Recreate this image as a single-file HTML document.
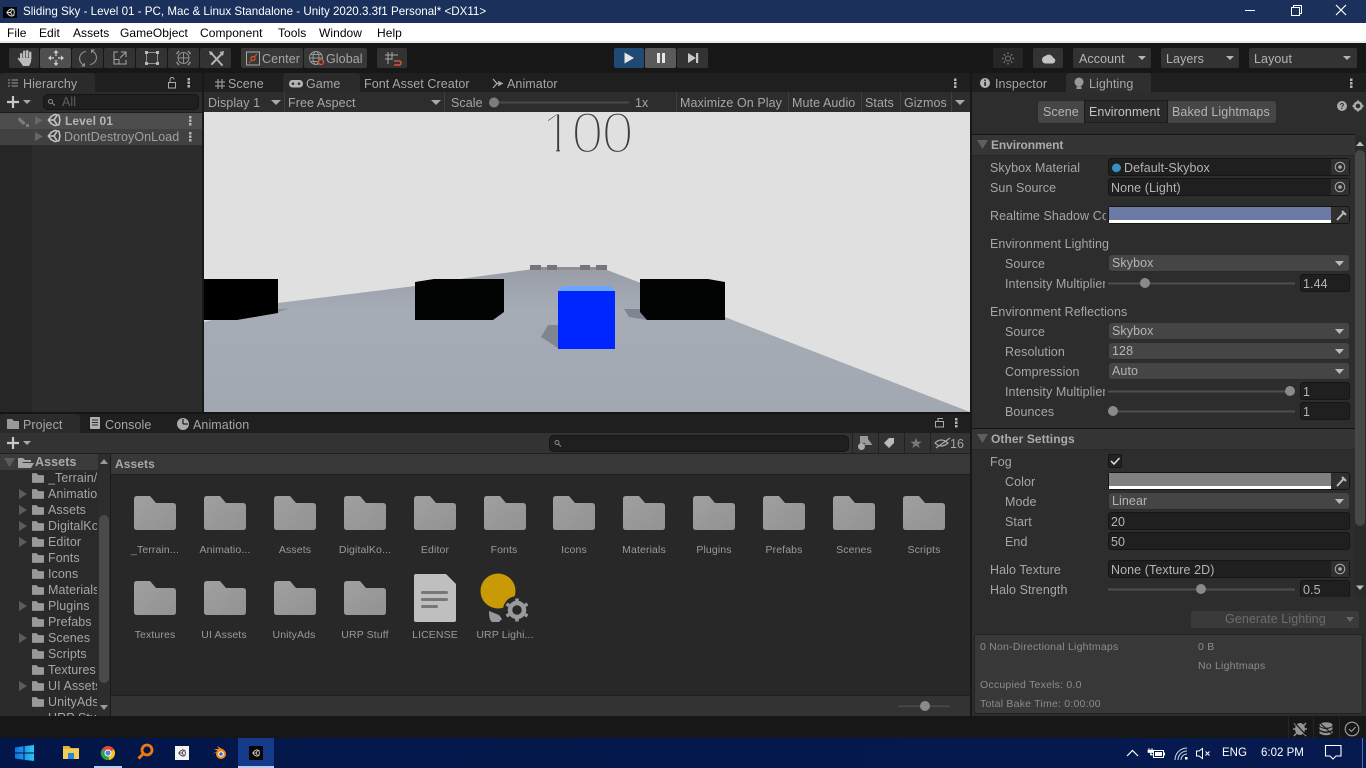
<!DOCTYPE html>
<html><head><meta charset="utf-8"><title>Unity</title>
<style>
html,body{margin:0;padding:0;background:#191919;width:1366px;height:768px;overflow:hidden}
body{position:relative;font-family:"Liberation Sans",sans-serif;font-size:12.5px;letter-spacing:.08px;color:#a6a6a6}
.b{position:absolute}
.t{position:absolute;white-space:nowrap;line-height:16px;height:16px}
.f{position:absolute;background:#1f1f1f;border:1px solid #151515;border-radius:3px;box-sizing:border-box}
.d{position:absolute;background:#454545;border-radius:3px;box-sizing:border-box;border-bottom:1px solid #2a2a2a;left:1109px;width:240px;height:17px}
.h{font-weight:bold}
.c{text-align:center;transform:translateX(-50%);font-size:10.5px;color:#9a9a9a;letter-spacing:.12px}
.m{color:#000;font-size:12px;letter-spacing:.05px;top:25px}
.tool{position:absolute;top:48px;height:20px;background:#333;border-radius:2px}
.s{font-size:10.5px;color:#8c8c8c;letter-spacing:.22px}
.cl{overflow:hidden}
svg{position:absolute;left:0;top:0}
</style></head><body>
<!-- title bar -->
<div class="b" style="left:0;top:0;width:1366px;height:23px;background:#1c305c"></div>
<div class="b" style="left:0;top:23px;width:1366px;height:19px;background:#fff"></div>
<div class="b" style="left:0;top:41px;width:1366px;height:2px;background:#ececec"></div>
<div class="b" style="left:0;top:43px;width:1366px;height:30px;background:#171717"></div>
<!-- toolbar buttons -->
<div class="tool" style="left:9px;width:30px"></div>
<div class="tool" style="left:40px;width:31px;background:#4f4f4f"></div>
<div class="tool" style="left:72px;width:31px"></div>
<div class="tool" style="left:104px;width:31px"></div>
<div class="tool" style="left:136px;width:31px"></div>
<div class="tool" style="left:168px;width:31px"></div>
<div class="tool" style="left:200px;width:31px"></div>
<div class="tool" style="left:241px;width:62px;background:#383838"></div>
<div class="tool" style="left:304px;width:63px;background:#383838"></div>
<div class="tool" style="left:377px;width:30px"></div>
<div class="tool" style="left:614px;width:30px;background:#1f4a74"></div>
<div class="tool" style="left:645px;width:31px;background:#5a5a5a"></div>
<div class="tool" style="left:677px;width:31px"></div>
<div class="tool" style="left:993px;width:30px;background:#262626"></div>
<div class="tool" style="left:1033px;width:30px"></div>
<div class="tool" style="left:1073px;width:78px"></div>
<div class="tool" style="left:1161px;width:78px"></div>
<div class="tool" style="left:1249px;width:108px"></div>
<!-- hierarchy -->
<div class="b" style="left:0;top:73px;width:202px;height:19px;background:#1f1f1f"></div>
<div class="b" style="left:0;top:73px;width:95px;height:19px;background:#2b2b2b;border-radius:3px 3px 0 0"></div>
<div class="b" style="left:0;top:92px;width:202px;height:320px;background:#2c2c2c"></div>
<div class="b" style="left:0;top:145px;width:32px;height:267px;background:#262626"></div>
<div class="f" style="left:43px;top:94px;width:156px;height:16px;border-radius:5px"></div>
<div class="b" style="left:0;top:113px;width:202px;height:16px;background:#4d4d4d"></div>
<div class="b" style="left:0;top:129px;width:202px;height:16px;background:#414141"></div>
<div class="b" style="left:0;top:112px;width:202px;height:1px;background:#1c1c1c"></div>
<!-- game -->
<div class="b" style="left:204px;top:73px;width:766px;height:19px;background:#1f1f1f;border-radius:3px 3px 0 0"></div>
<div class="b" style="left:283px;top:73px;width:77px;height:19px;background:#2b2b2b;border-radius:3px 3px 0 0"></div>
<div class="b" style="left:204px;top:92px;width:766px;height:20px;background:#2d2d2d"></div>
<div class="b" style="left:204px;top:112px;width:766px;height:300px;background:#e0e0e0;overflow:hidden">
<div class="t" style="left:337px;top:-7px;font-size:58px;line-height:58px;height:58px;letter-spacing:-2px;color:#3c3c3c;-webkit-text-stroke:3.2px #e0e0e0">100</div>
<div class="b" style="left:340px;top:36px;width:12px;height:9px;background:#e0e0e0"></div>
<div class="b" style="left:356px;top:36px;width:12px;height:9px;background:#e0e0e0"></div>
</div>
<!-- project -->
<div class="b" style="left:0;top:412px;width:970px;height:2px;background:#151515"></div>
<div class="b" style="left:0;top:414px;width:970px;height:19px;background:#1f1f1f"></div>
<div class="b" style="left:0;top:414px;width:80px;height:19px;background:#2b2b2b;border-radius:3px 3px 0 0"></div>
<div class="b" style="left:0;top:433px;width:970px;height:21px;background:#333;border-bottom:1px solid #202020;box-sizing:border-box"></div>
<div class="f" style="left:549px;top:435px;width:300px;height:17px;border-radius:5px"></div>
<div class="b" style="left:852px;top:433px;width:1px;height:20px;background:#222"></div>
<div class="b" style="left:878px;top:433px;width:1px;height:20px;background:#222"></div>
<div class="b" style="left:904px;top:433px;width:1px;height:20px;background:#222"></div>
<div class="b" style="left:930px;top:433px;width:1px;height:20px;background:#222"></div>
<div class="b" style="left:0;top:454px;width:110px;height:262px;background:#2a2a2a"></div>
<div class="b" style="left:0;top:454px;width:98px;height:16px;background:#3b3b3b"></div>
<div class="b" style="left:98px;top:454px;width:12px;height:262px;background:#2d2d2d"></div>
<div class="b" style="left:99px;top:515px;width:10px;height:168px;background:#4a4a4a;border-radius:5px"></div>
<div class="b" style="left:110px;top:454px;width:1px;height:262px;background:#1a1a1a"></div>
<div class="b" style="left:111px;top:454px;width:859px;height:20px;background:#383838"></div>
<div class="b" style="left:111px;top:474px;width:859px;height:1px;background:#1e1e1e"></div>
<div class="b" style="left:111px;top:475px;width:859px;height:220px;background:#282828"></div>
<div class="b" style="left:111px;top:695px;width:859px;height:1px;background:#1e1e1e"></div>
<div class="b" style="left:111px;top:696px;width:859px;height:20px;background:#333"></div>
<!-- right panel -->
<div class="b" style="left:970px;top:73px;width:2px;height:643px;background:#171717"></div>
<div class="b" style="left:972px;top:73px;width:394px;height:19px;background:#1f1f1f;border-radius:3px 0 0 0"></div>
<div class="b" style="left:1066px;top:73px;width:85px;height:19px;background:#2f2f2f;border-radius:3px 3px 0 0"></div>
<div class="b" style="left:972px;top:92px;width:394px;height:624px;background:#2d2d2d"></div>
<div class="b" style="left:1038px;top:101px;width:46px;height:22px;background:#464646;border-radius:3px 0 0 3px"></div>
<div class="b" style="left:1084px;top:100px;width:84px;height:23px;background:#2a2a2a;border:1px solid #1c1c1c;box-sizing:border-box"></div>
<div class="b" style="left:1168px;top:101px;width:108px;height:22px;background:#464646;border-radius:0 3px 3px 0"></div>
<div class="b" style="left:972px;top:134px;width:383px;height:1px;background:#141414"></div>
<div class="b" style="left:972px;top:135px;width:383px;height:20px;background:#353535"></div>
<div class="b" style="left:972px;top:155px;width:383px;height:1px;background:#272727"></div>
<div class="b" style="left:972px;top:428px;width:383px;height:1px;background:#141414"></div>
<div class="b" style="left:972px;top:429px;width:383px;height:20px;background:#353535"></div>
<div class="b" style="left:972px;top:449px;width:383px;height:1px;background:#272727"></div>
<div class="b" style="left:1355px;top:135px;width:11px;height:463px;background:#2a2a2a"></div>
<div class="b" style="left:1355px;top:150px;width:10px;height:376px;background:#484848;border-radius:5px"></div>
<!-- fields -->
<div class="f" style="left:1108px;top:158px;width:242px;height:18px"></div>
<div class="b" style="left:1331px;top:159px;width:18px;height:16px;background:#303030"></div>
<div class="f" style="left:1108px;top:178px;width:242px;height:18px"></div>
<div class="b" style="left:1331px;top:179px;width:18px;height:16px;background:#303030"></div>
<div class="f" style="left:1108px;top:206px;width:242px;height:18px;background:#303030"></div>
<div class="b" style="left:1109px;top:207px;width:222px;height:13px;background:#6b7aa4"></div>
<div class="b" style="left:1109px;top:220px;width:222px;height:3px;background:#fff"></div>
<div class="d" style="top:255px"></div>
<div class="f" style="left:1300px;top:274px;width:50px;height:18px"></div>
<div class="d" style="top:323px"></div>
<div class="d" style="top:343px"></div>
<div class="d" style="top:363px"></div>
<div class="f" style="left:1300px;top:382px;width:50px;height:18px"></div>
<div class="f" style="left:1300px;top:402px;width:50px;height:18px"></div>
<div class="b" style="left:1108px;top:454px;width:14px;height:14px;background:#222;border:1px solid #151515;border-radius:2px;box-sizing:border-box"></div>
<div class="f" style="left:1108px;top:472px;width:242px;height:18px;background:#303030"></div>
<div class="b" style="left:1109px;top:473px;width:222px;height:13px;background:#808080"></div>
<div class="b" style="left:1109px;top:486px;width:222px;height:3px;background:#fff"></div>
<div class="d" style="top:493px"></div>
<div class="f" style="left:1108px;top:512px;width:242px;height:18px"></div>
<div class="f" style="left:1108px;top:532px;width:242px;height:18px"></div>
<div class="f" style="left:1108px;top:560px;width:242px;height:18px"></div>
<div class="b" style="left:1331px;top:561px;width:18px;height:16px;background:#303030"></div>
<div class="f" style="left:1300px;top:580px;width:50px;height:17px;border-bottom:0;border-radius:3px 3px 0 0"></div>
<div class="b" style="left:1191px;top:611px;width:168px;height:17px;background:#3a3a3a;border-radius:2px"></div>
<div class="b" style="left:974px;top:634px;width:389px;height:80px;background:#383838;border:1px solid #232323;border-radius:3px;box-sizing:border-box"></div>
<!-- status & taskbar -->
<div class="b" style="left:0;top:716px;width:1366px;height:22px;background:#171717"></div>
<div class="b" style="left:1288px;top:716px;width:1px;height:22px;background:#262626"></div>
<div class="b" style="left:1313px;top:716px;width:1px;height:22px;background:#262626"></div>
<div class="b" style="left:1339px;top:716px;width:1px;height:22px;background:#262626"></div>
<div class="b" style="left:0;top:738px;width:1366px;height:30px;background:linear-gradient(90deg,#02164a,#071a50)"></div>
<div class="b" style="left:238px;top:738px;width:36px;height:30px;background:#153a8a"></div>
<div class="b" style="left:238px;top:766px;width:36px;height:2px;background:#b5cdf5"></div>
<div class="b" style="left:94px;top:766px;width:28px;height:2px;background:#b5cdf5"></div>
<div class="b" style="left:1362px;top:738px;width:1px;height:30px;background:#5a6d98"></div>

<svg width="1366" height="768" viewBox="0 0 1366 768">
<defs>
<symbol id="fo" viewBox="0 0 42 34"><path d="M3 0H16L22 7H39Q42 7 42 10V31Q42 34 39 34H3Q0 34 0 31V3Q0 0 3 0Z"/></symbol>
<linearGradient id="fg" x1="0" y1="0" x2="1" y2="1"><stop offset="0" stop-color="#a0a0a0"/><stop offset="1" stop-color="#929292"/></linearGradient>
<linearGradient id="fl" gradientUnits="userSpaceOnUse" x1="0" y1="268" x2="0" y2="412"><stop offset="0" stop-color="#989da8"/><stop offset=".3" stop-color="#a6acb5"/><stop offset="1" stop-color="#a2a8b1"/></linearGradient>
<linearGradient id="wg" x1="0" y1="0" x2="1" y2="0"><stop offset="0" stop-color="#0a72e0"/><stop offset="1" stop-color="#30c4f5"/></linearGradient>
<symbol id="un" viewBox="0 0 14 14"><path d="M1.300 7 4.300 3.400 8 1.400 12 2.400 12.900 7 12 11.600 8 12.600 4.300 10.600Z" fill="none" stroke="currentColor" stroke-width="1.500"/><path d="M7 7H1.500M7 7 9.700 2.800M7 7 9.700 11.200" fill="none" stroke="currentColor" stroke-width="1.500"/></symbol>
</defs>
<!-- title unity -->
<rect x="3" y="7" width="14" height="11" fill="#050505"/>
<use href="#un" x="6" y="8" width="9" height="9" color="#ddd"/>
<!-- hand -->
<g fill="#bcbcbc"><rect x="20" y="53" width="2.400" height="7" rx="1.200"/><rect x="23" y="50.500" width="2.400" height="8" rx="1.200"/><rect x="26" y="50" width="2.400" height="8" rx="1.200"/><rect x="29" y="51.500" width="2.400" height="8" rx="1.200"/><path d="M20 58H31.400L31 62 29 66H23L21 63 17.500 58.800 18.600 57.600 20 58.600Z"/></g>
<!-- move -->
<g stroke="#d0d0d0" stroke-width="1.200" fill="none"><path d="M50 58H54M58 58H62M56 52V56M56 60V64"/></g>
<g fill="#d0d0d0"><path d="M56 50 53.500 53H58.500ZM56 66 53.500 63H58.500ZM48 58 51 55.500V60.500ZM64 58 61 55.500V60.500Z"/></g>
<!-- rotate -->
<g fill="none" stroke="#8f8f8f" stroke-width="1.100"><path d="M86 51.500A7 7 0 0 0 84 65"/><path d="M90 64.500A7 7 0 0 0 92 51"/></g><path d="M85 62.500V66.500H81ZM91 53.500V49.500H95Z" fill="#8f8f8f"/>
<!-- scale -->
<g fill="none" stroke="#a0a0a0" stroke-width="1.100"><path d="M118 52H114V64H126V60"/><path d="M121 52H126V57M126 52 120 58"/></g><rect x="114" y="59.500" width="5" height="4.500" fill="none" stroke="#a0a0a0"/>
<!-- rect -->
<g fill="none" stroke="#909090" stroke-width="1"><rect x="146.500" y="52.500" width="11" height="11"/></g><g fill="#b8b8b8"><rect x="145" y="51" width="3" height="3"/><rect x="156" y="51" width="3" height="3"/><rect x="145" y="62" width="3" height="3"/><rect x="156" y="62" width="3" height="3"/></g>
<!-- transform -->
<g fill="none" stroke="#8f8f8f" stroke-width="1"><circle cx="183.500" cy="58" r="5.500"/><path d="M178 58H189M183.500 52.500V63.500"/><path d="M176.500 54 179 51M190.500 54 188 51M176.500 62 179 65M190.500 62 188 65" stroke-width="1.500"/></g>
<!-- tools -->
<g fill="none" stroke="#b4b4b4" stroke-width="2" stroke-linecap="round"><path d="M212 54 222 65"/><path d="M222 53.500 212 64"/></g><path d="M219.500 52 224 51 223 56ZM209 51 212.500 52 213 55 210 55Z" fill="#b4b4b4"/>
<!-- center -->
<rect x="246.500" y="52" width="13" height="13" fill="none" stroke="#a8a8a8" stroke-width="1"/><path d="M257 54 249 63" stroke="#c9572a" stroke-width="1"/><circle cx="253" cy="58.500" r="2" fill="#383838" stroke="#d8562a" stroke-width="1.200"/>
<!-- global -->
<g fill="none" stroke="#999" stroke-width="1"><circle cx="316" cy="58" r="6.500"/><ellipse cx="316" cy="58" rx="3" ry="6.500"/><path d="M309.500 58H322.500M310.500 54.500H321.500M310.500 61.500H321.500"/></g><circle cx="321" cy="62" r="2.500" fill="#383838" stroke="#d8562a" stroke-width="1.300"/>
<!-- snap -->
<g fill="none" stroke="#a8a8a8" stroke-width="1"><path d="M388 52V64M392 52V60M385 55H398M385 59H392"/></g><path d="M394 61H399M394 65H399A2 2 0 0 0 399 61" fill="none" stroke="#d8562a" stroke-width="1.600"/>
<!-- play controls -->
<path d="M624.500 52.500 634 58 624.500 63.500Z" fill="#e6e6e6"/><rect x="657" y="53" width="3" height="10" fill="#e6e6e6"/><rect x="662" y="53" width="3" height="10" fill="#e6e6e6"/><path d="M688 53 696 58 688 63Z" fill="#c8c8c8"/><rect x="696" y="53" width="2.200" height="10" fill="#c8c8c8"/>
<!-- collab, cloud -->
<g fill="none" stroke="#777" stroke-width="1"><circle cx="1008" cy="58.500" r="2.500"/><path d="M1008 52.500V54M1008 63V64.500M1002 58.500H1003.500M1012.500 58.500H1014M1003.800 54.300 1005 55.500M1011 61.500 1012.200 62.700M1003.800 62.700 1005 61.500M1011 55.500 1012.200 54.300" stroke-width="1.400"/></g>
<path d="M1045 63.500H1052A3 3 0 0 0 1053 57.600 4.500 4.500 0 0 0 1045.500 56 3.800 3.800 0 0 0 1045 63.500Z" fill="#c4c4c4"/>
<g fill="#b4b4b4"><path d="M1138 56H1146L1142 60ZM1226 56H1234L1230 60ZM1343 56H1351L1347 60Z"/></g>
<!-- hierarchy icons -->
<g fill="none" stroke="#9a9a9a" stroke-width="1"><path d="M8 80H10M8 83H10M8 86H10M11.500 80H18M11.500 83H18M11.500 86H18"/></g>
<g fill="none" stroke="#aaa" stroke-width="1"><rect x="168.500" y="82.500" width="7" height="5.500"/><path d="M170 82.500V79.500A2 2 0 0 1 174 79.500"/></g>
<g fill="#b4b4b4"><rect x="187.500" y="78" width="2.500" height="2.500"/><rect x="187.500" y="81.500" width="2.500" height="2.500"/><rect x="187.500" y="85" width="2.500" height="2.500"/><rect x="954" y="78.500" width="2.500" height="2.500"/><rect x="954" y="82" width="2.500" height="2.500"/><rect x="954" y="85.500" width="2.500" height="2.500"/><rect x="1350" y="78.500" width="2.500" height="2.500"/><rect x="1350" y="82" width="2.500" height="2.500"/><rect x="1350" y="85.500" width="2.500" height="2.500"/><rect x="955" y="418" width="2.500" height="2.500"/><rect x="955" y="421.500" width="2.500" height="2.500"/><rect x="955" y="425" width="2.500" height="2.500"/><rect x="189" y="116" width="2.500" height="2.500"/><rect x="189" y="119.500" width="2.500" height="2.500"/><rect x="189" y="123" width="2.500" height="2.500"/><rect x="189" y="132" width="2.500" height="2.500"/><rect x="189" y="135.500" width="2.500" height="2.500"/><rect x="189" y="139" width="2.500" height="2.500"/></g>
<path d="M7 102H19M13 96V108" stroke="#c8c8c8" stroke-width="2.200"/><path d="M23 100H31L27 104Z" fill="#a8a8a8"/>
<path d="M7 443H19M13 437V449" stroke="#c8c8c8" stroke-width="2.200"/><path d="M23 441H31L27 445Z" fill="#a8a8a8"/>
<g fill="none" stroke="#8c8c8c" stroke-width="1"><circle cx="50.500" cy="101.500" r="2"/><path d="M52 103 55 105.500"/><circle cx="557" cy="442.500" r="2"/><path d="M558.500 444 561 446.500"/></g>
<path d="M19 117 26 123 23 125 18 120Z M26 124H29V127H26Z" fill="#7b7b7b"/>
<path d="M35 116V125L43 120.500ZM35 132V141L43 136.500Z" fill="#666"/>
<use href="#un" x="47" y="113" width="14" height="14" color="#c8c8c8"/>
<use href="#un" x="47" y="129" width="14" height="14" color="#c8c8c8"/>
<!-- game tab icons -->
<path d="M218 79V89M222 79V89M215 82H225M215 86H225" stroke="#aaa" stroke-width="1" fill="none"/>
<rect x="289" y="80" width="14" height="7.500" rx="3.500" fill="#b4b4b4"/><circle cx="293" cy="83.700" r="1.300" fill="#333"/><circle cx="299" cy="83.700" r="1.300" fill="#333"/>
<path d="M493 79 497 83.500H501M493 88 497 83.500M498 81.500 502 83.500 498 85.500" fill="none" stroke="#aaa" stroke-width="1.300"/>
<path d="M271 100H281L276 105ZM431 100H441L436 105ZM955 100H965L960 105Z" fill="#a8a8a8"/>
<rect x="499" y="101.500" width="130" height="2" fill="#4a4a4a"/><circle cx="494" cy="102.500" r="5" fill="#7d7d7d"/>
<g fill="#3f3f3f"><rect x="284" y="92" width="1" height="20"/><rect x="444" y="92" width="1" height="20"/><rect x="676" y="92" width="1" height="20"/><rect x="788" y="92" width="1" height="20"/><rect x="861" y="92" width="1" height="20"/><rect x="900" y="92" width="1" height="20"/><rect x="951" y="92" width="1" height="20"/></g>
<!-- scene -->
<path d="M204 322 278 303 415 286 467 278 541 268 607 270 641 283 740 323 970 412 204 412Z" fill="url(#fl)"/>
<rect x="541" y="267" width="66" height="3" fill="#8f8f8f"/>
<g fill="#767676"><rect x="530" y="265" width="11" height="5"/><rect x="547" y="265" width="10" height="5"/><rect x="580" y="265" width="10" height="5"/><rect x="596" y="265" width="11" height="5"/></g>
<path d="M548 325H558V348L541 337Z" fill="#808691"/><path d="M624 309H640L647 320 629 317Z" fill="#808691"/><path d="M278 309 289 308.500 278 312Z" fill="#8c919c"/>
<path d="M204 279H278V313L237 320H204Z" fill="#000"/>
<path d="M415 282 434 279H504V312L493 320H415Z" fill="#020404"/>
<path d="M640 279H708L725 282V320H647L640 312Z" fill="#020404"/>
<path d="M558 291 563 286H610L615 291Z" fill="#6aa5ff"/><rect x="558" y="291" width="57" height="58" fill="#0026ff"/>
<!-- project tabs icons -->
<path d="M7 419H12L14 421H19V429H7Z" fill="#999"/>
<rect x="90" y="417" width="10" height="12" rx="1" fill="#b0b0b0"/><path d="M92 420H98M92 422.500H98M92 425H98" stroke="#2a2a2a"/>
<circle cx="183" cy="424" r="6" fill="#aaa"/><path d="M183 424V419M183 424H188" stroke="#222" stroke-width="1.300"/>
<g fill="none" stroke="#aaa"><rect x="935.500" y="421.500" width="8" height="5.500"/><path d="M938 421V418.500H943"/></g>
<!-- filter icons -->
<rect x="860" y="436" width="8" height="7" fill="#999"/><path d="M868 439 872.500 445H864Z" fill="#999"/><circle cx="861.500" cy="446.500" r="3.500" fill="#aaa"/>
<path d="M884 443 889 438H894V443L889 448Z" fill="#bbb"/>
<path d="M916 438 917.600 441.600H921.700L918.400 444.200 919.700 448 916 445.800 912.300 448 913.600 444.200 910.300 441.600H914.400Z" fill="#777"/>
<path d="M935 443Q941 437 948 443Q941 449 935 443ZM936 448 950 438" fill="none" stroke="#aaa" stroke-width="1.200"/>
<!-- tree -->
<path d="M4 458H15L9.500 467Z" fill="#5c5c5c"/>
<path d="M18 458H23L25 460H31V462H23L20 467H18Z" fill="#a8a8a8"/><path d="M21 463H34L31 468H18Z" fill="#a8a8a8"/>
<g fill="#999">
<use href="#fo" x="32" y="473" width="12" height="10"/><use href="#fo" x="32" y="489" width="12" height="10"/><use href="#fo" x="32" y="505" width="12" height="10"/><use href="#fo" x="32" y="521" width="12" height="10"/><use href="#fo" x="32" y="537" width="12" height="10"/><use href="#fo" x="32" y="553" width="12" height="10"/><use href="#fo" x="32" y="569" width="12" height="10"/><use href="#fo" x="32" y="585" width="12" height="10"/><use href="#fo" x="32" y="601" width="12" height="10"/><use href="#fo" x="32" y="617" width="12" height="10"/><use href="#fo" x="32" y="633" width="12" height="10"/><use href="#fo" x="32" y="649" width="12" height="10"/><use href="#fo" x="32" y="665" width="12" height="10"/><use href="#fo" x="32" y="681" width="12" height="10"/><use href="#fo" x="32" y="697" width="12" height="10"/>
</g>
<path d="M19 489V499L27 494ZM19 505V515L27 510ZM19 521V531L27 526ZM19 537V547L27 542ZM19 601V611L27 606ZM19 633V643L27 638ZM19 681V691L27 686Z" fill="#5c5c5c"/>
<path d="M104 459 100 464H108ZM104 710 100 705H108Z" fill="#999"/>
<path d="M1360 141.500 1356 146H1364ZM1360 590 1356 585.500H1364Z" fill="#bbb"/>
<!-- grid -->
<g fill="url(#fg)">
<use href="#fo" x="134" y="496" width="42" height="34"/><use href="#fo" x="204" y="496" width="42" height="34"/><use href="#fo" x="274" y="496" width="42" height="34"/><use href="#fo" x="344" y="496" width="42" height="34"/><use href="#fo" x="414" y="496" width="42" height="34"/><use href="#fo" x="484" y="496" width="42" height="34"/><use href="#fo" x="553" y="496" width="42" height="34"/><use href="#fo" x="623" y="496" width="42" height="34"/><use href="#fo" x="693" y="496" width="42" height="34"/><use href="#fo" x="763" y="496" width="42" height="34"/><use href="#fo" x="833" y="496" width="42" height="34"/><use href="#fo" x="903" y="496" width="42" height="34"/>
<use href="#fo" x="134" y="581" width="42" height="34"/><use href="#fo" x="204" y="581" width="42" height="34"/><use href="#fo" x="274" y="581" width="42" height="34"/><use href="#fo" x="344" y="581" width="42" height="34"/>
</g>
<path d="M416 574H446L456 584V620Q456 622 454 622H416Q414 622 414 620V576Q414 574 416 574Z" fill="#bfbfbf"/>
<g fill="#777"><rect x="421" y="591" width="27" height="3" rx="1.500"/><rect x="421" y="598" width="27" height="3" rx="1.500"/><rect x="421" y="605" width="17" height="3" rx="1.500"/></g>
<circle cx="498" cy="591" r="17.500" fill="#c99a06"/>
<path d="M489 611 499 615 502 619 499 622 H492Q489 620 489 611Z" fill="#999"/>
<circle cx="517" cy="610" r="14" fill="#282828"/>
<circle cx="517" cy="610" r="7" fill="none" stroke="#9a9a9a" stroke-width="4.500"/>
<g stroke="#9a9a9a" stroke-width="3.500"><path d="M517 598.500V601.500M517 618.500V621.500M506.500 604 509 605.500M525 614.500 527.500 616M506.500 616 509 614.500M525 605.500 527.500 604"/></g>
<!-- bottom slider -->
<rect x="898" y="705.500" width="52" height="1.500" fill="#4a4a4a"/><circle cx="925" cy="706" r="5" fill="#8a8a8a"/>
<!-- inspector icons -->
<circle cx="985" cy="83" r="5" fill="#b4b4b4"/><rect x="984.300" y="82" width="1.600" height="4" fill="#222"/><rect x="984.300" y="79.500" width="1.600" height="1.600" fill="#222"/>
<circle cx="1079" cy="82" r="4.500" fill="#999"/><rect x="1076.500" y="86.500" width="5" height="2.500" fill="#999"/>
<circle cx="1342" cy="106" r="5" fill="#aaa"/><text x="1342" y="109" fill="#2d2d2d" font-size="8" font-weight="bold" text-anchor="middle" style="letter-spacing:0">?</text>
<circle cx="1358" cy="106" r="3.500" fill="none" stroke="#aaa" stroke-width="2.500"/><g stroke="#aaa" stroke-width="2"><path d="M1358 100.500V102.500M1358 109.500V111.500M1352.500 106H1354.500M1361.500 106H1363.500"/></g>
<path d="M977 140H988L982.500 149ZM977 434H988L982.500 443Z" fill="#5f5f5f"/>
<circle cx="1116.500" cy="168" r="4.500" fill="#3a90c0"/><path d="M1116.500 172.500A4.500 4.500 0 0 0 1121 168 5 5 0 0 1 1113 170.800 4.500 4.500 0 0 0 1116.500 172.500Z" fill="#1c3a4a"/>
<g fill="none" stroke="#aaa" stroke-width="1"><circle cx="1340" cy="167" r="4.800"/><circle cx="1340" cy="187" r="4.800"/><circle cx="1340" cy="569" r="4.800"/></g>
<g fill="#aaa"><circle cx="1340" cy="167" r="1.800"/><circle cx="1340" cy="187" r="1.800"/><circle cx="1340" cy="569" r="1.800"/></g>
<path d="M1337 220 1344 212.500M1342 211 1346 215" stroke="#bbb" stroke-width="2" fill="none"/>
<path d="M1337 486 1344 478.500M1342 477 1346 481" stroke="#bbb" stroke-width="2" fill="none"/>
<path d="M1335 261H1344L1339.500 266ZM1335 329H1344L1339.500 334ZM1335 349H1344L1339.500 354ZM1335 369H1344L1339.500 374ZM1335 499H1344L1339.500 504Z" fill="#bbb"/>
<g fill="#4f4f4f"><rect x="1108" y="282.500" width="187" height="2"/><rect x="1108" y="390.500" width="187" height="2"/><rect x="1108" y="410.500" width="187" height="2"/><rect x="1108" y="588.500" width="187" height="2"/></g>
<g fill="#8a8a8a"><circle cx="1145" cy="283" r="5"/><circle cx="1290" cy="391" r="5"/><circle cx="1113" cy="411" r="5"/><circle cx="1201" cy="589" r="5"/></g>
<path d="M1111 461 1114 464 1119.500 458" fill="none" stroke="#e0e0e0" stroke-width="1.500"/>
<path d="M1346 617H1354L1350 622Z" fill="#666"/>
<!-- status icons -->
<g fill="#949494"><ellipse cx="1300" cy="729" rx="5" ry="6"/><path d="M1294 723 1306 736M1306 723 1294 736M1293 729H1307" stroke="#949494" stroke-width="1.400"/></g>
<path d="M1294 722 1306 735" stroke="#171717" stroke-width="1.200"/>
<g fill="#949494"><ellipse cx="1326" cy="725" rx="6.500" ry="2.800"/><path d="M1319.500 727Q1326 731 1332.500 727V729.500Q1326 733.500 1319.500 729.500ZM1319.500 731Q1326 735 1332.500 731V733.500Q1326 737 1319.500 733.500Z"/></g><path d="M1320 723 1332 734" stroke="#171717"/>
<circle cx="1352" cy="729" r="6.800" fill="none" stroke="#a0a0a0" stroke-width="1.100"/><path d="M1349 729 1351.500 731.500 1355.500 727" fill="none" stroke="#a0a0a0" stroke-width="1.100"/>
<!-- windows logo -->
<path d="M15 747.500 23.500 746.300V752.500H15ZM24.500 746.100 34 745V752.500H24.500ZM15 753.500H23.500V759.700L15 758.500ZM24.500 753.500H34V761L24.500 759.900Z" fill="url(#wg)"/>
<path d="M63 746H69L71 748H79V751H63Z" fill="#e4b43a"/><path d="M63 749H79V759H63Z" fill="#f2cd5c"/><rect x="68" y="753" width="6" height="6" fill="#2a86d8"/>
<!-- chrome -->
<circle cx="108" cy="753" r="7" fill="#e04a3a"/><path d="M108 753 114 749.500A7 7 0 0 1 109 760Z" fill="#f5c518"/><path d="M108 753 109 760A7 7 0 0 1 101.800 749.500Z" fill="#2aa14a"/><circle cx="108" cy="753" r="3.500" fill="#fff"/><circle cx="108" cy="753" r="2.600" fill="#4a88e8"/>
<!-- search-->
<circle cx="147" cy="750" r="5" fill="none" stroke="#f07a10" stroke-width="2.800"/><path d="M143 754 138.500 758.500" stroke="#f07a10" stroke-width="3"/>
<rect x="175" y="746" width="14" height="14" fill="#f4f4f4"/><use href="#un" x="178" y="749" width="8" height="8" color="#333"/>
<!-- blender -->
<circle cx="221" cy="754" r="5" fill="#f08a1c"/><circle cx="221" cy="754" r="2.800" fill="#fff"/><circle cx="221" cy="754" r="1.800" fill="#2d6db0"/><path d="M212 754 218 751 214 749 219 749 217 746 224 750" fill="#f08a1c"/>
<rect x="249" y="746" width="14" height="14" fill="#050505"/><use href="#un" x="252" y="749" width="8" height="8" color="#ddd"/>
<!-- tray -->
<path d="M1127 756 1132.500 750.500 1138 756" fill="none" stroke="#fff" stroke-width="1.200"/>
<rect x="1153.500" y="750.500" width="10" height="7" fill="#02164a" stroke="#fff"/><rect x="1155" y="752" width="7" height="4" fill="#fff"/><rect x="1164" y="752.500" width="1" height="3" fill="#fff"/><path d="M1149 748V750M1152 748V750M1148 750H1153V752.500H1148ZM1150.500 752.500V755H1153" fill="#fff" stroke="#fff" stroke-width=".7"/>
<g fill="none" stroke="#cfd6e6" stroke-width="1"><path d="M1175 760A12 12 0 0 1 1187 748M1178 760A9 9 0 0 1 1187 751M1181 760A6 6 0 0 1 1187 754"/></g><rect x="1185" y="757" width="2.500" height="2.500" fill="#fff"/>
<path d="M1196.500 751H1199L1202.500 748.500V758.500L1199 756H1196.500Z" fill="none" stroke="#fff" stroke-width="1"/><path d="M1205.500 751.500 1209.500 755.500M1209.500 751.500 1205.500 755.500" stroke="#fff" stroke-width="1"/>
<path d="M1325.500 745.500H1341V756H1336L1333 759 1330 756H1325.500Z" fill="none" stroke="#fff" stroke-width="1.100"/>
</svg>

<!-- title text -->
<div class="t" style="left:23px;top:4px;color:#fff;font-size:11.6px;letter-spacing:0">Sliding Sky - Level 01 - PC, Mac &amp; Linux Standalone - Unity 2020.3.3f1 Personal* &lt;DX11&gt;</div>
<div class="b" style="left:1245px;top:10px;width:10px;height:1px;background:#fff"></div>
<div class="b" style="left:1291px;top:7px;width:7px;height:7px;border:1px solid #fff;background:#1c305c;z-index:2"></div>
<div class="b" style="left:1293px;top:5px;width:7px;height:7px;border:1px solid #fff"></div>
<svg style="left:1335px;top:4px" width="12" height="12"><path d="M1 1 11 11M11 1 1 11" stroke="#fff" stroke-width="1.200"/></svg>
<!-- menu -->
<div class="t m" style="left:7px">File</div><div class="t m" style="left:39px">Edit</div><div class="t m" style="left:73px">Assets</div><div class="t m" style="left:120px">GameObject</div><div class="t m" style="left:200px">Component</div><div class="t m" style="left:278px">Tools</div><div class="t m" style="left:319px">Window</div><div class="t m" style="left:377px">Help</div>
<!-- toolbar -->
<div class="t" style="left:262px;top:51px">Center</div><div class="t" style="left:326px;top:51px">Global</div>
<div class="t" style="left:1079px;top:51px;color:#b4b4b4">Account</div><div class="t" style="left:1166px;top:51px;color:#b4b4b4">Layers</div><div class="t" style="left:1254px;top:51px;color:#b4b4b4">Layout</div>
<!-- tabs -->
<div class="t" style="left:23px;top:76px">Hierarchy</div>
<div class="t" style="left:228px;top:76px">Scene</div><div class="t" style="left:306px;top:76px">Game</div><div class="t" style="left:364px;top:76px">Font Asset Creator</div><div class="t" style="left:507px;top:76px">Animator</div>
<div class="t" style="left:995px;top:76px">Inspector</div><div class="t" style="left:1089px;top:76px">Lighting</div>
<div class="t" style="left:62px;top:94px;color:#5e5e5e">All</div>
<div class="t h" style="left:65px;top:113px;color:#b4b4b4;font-size:12px">Level 01</div><div class="t" style="left:64px;top:129px;color:#a0a0a0">DontDestroyOnLoad</div>
<div class="t" style="left:208px;top:95px">Display 1</div><div class="t" style="left:288px;top:95px">Free Aspect</div><div class="t" style="left:451px;top:95px">Scale</div><div class="t" style="left:635px;top:95px">1x</div>
<div class="t" style="left:680px;top:95px">Maximize On Play</div><div class="t" style="left:792px;top:95px">Mute Audio</div><div class="t" style="left:865px;top:95px">Stats</div><div class="t" style="left:904px;top:95px">Gizmos</div>
<!-- project text -->
<div class="t" style="left:23px;top:417px">Project</div><div class="t" style="left:105px;top:417px">Console</div><div class="t" style="left:193px;top:417px">Animation</div>
<div class="t" style="left:950px;top:436px">16</div>
<div class="t h" style="left:35px;top:454px;color:#aaa">Assets</div><div class="t h" style="left:115px;top:456px;color:#a8a8a8;font-size:12px">Assets</div>
<div class="b cl" style="left:48px;top:470px;width:49px;height:246px">
<div class="t" style="left:0;top:0">_Terrain/</div><div class="t" style="left:0;top:16px">Animatio</div><div class="t" style="left:0;top:32px">Assets</div><div class="t" style="left:0;top:48px">DigitalKo</div><div class="t" style="left:0;top:64px">Editor</div><div class="t" style="left:0;top:80px">Fonts</div><div class="t" style="left:0;top:96px">Icons</div><div class="t" style="left:0;top:112px">Materials</div><div class="t" style="left:0;top:128px">Plugins</div><div class="t" style="left:0;top:144px">Prefabs</div><div class="t" style="left:0;top:160px">Scenes</div><div class="t" style="left:0;top:176px">Scripts</div><div class="t" style="left:0;top:192px">Textures</div><div class="t" style="left:0;top:208px">UI Assets</div><div class="t" style="left:0;top:224px">UnityAds</div><div class="t" style="left:0;top:240px">URP Stuff</div>
</div>
<div class="t c" style="left:155px;top:542px">_Terrain...</div><div class="t c" style="left:225px;top:542px">Animatio...</div><div class="t c" style="left:295px;top:542px">Assets</div><div class="t c" style="left:365px;top:542px">DigitalKo...</div><div class="t c" style="left:435px;top:542px">Editor</div><div class="t c" style="left:504px;top:542px">Fonts</div><div class="t c" style="left:574px;top:542px">Icons</div><div class="t c" style="left:644px;top:542px">Materials</div><div class="t c" style="left:714px;top:542px">Plugins</div><div class="t c" style="left:784px;top:542px">Prefabs</div><div class="t c" style="left:854px;top:542px">Scenes</div><div class="t c" style="left:924px;top:542px">Scripts</div>
<div class="t c" style="left:155px;top:627px">Textures</div><div class="t c" style="left:224px;top:627px">UI Assets</div><div class="t c" style="left:294px;top:627px">UnityAds</div><div class="t c" style="left:365px;top:627px">URP Stuff</div><div class="t c" style="left:435px;top:627px">LICENSE</div><div class="t c" style="left:505px;top:627px">URP Lighi...</div>
<!-- inspector text -->
<div class="t" style="left:1043px;top:104px;color:#b4b4b4">Scene</div><div class="t" style="left:1089px;top:104px;color:#c4c4c4">Environment</div><div class="t" style="left:1172px;top:104px;color:#b4b4b4">Baked Lightmaps</div>
<div class="t h" style="left:991px;top:137px;color:#ababab;font-size:12px;letter-spacing:-.1px">Environment</div>
<div class="t" style="left:990px;top:160px">Skybox Material</div><div class="t" style="left:1124px;top:160px;color:#b4b4b4">Default-Skybox</div>
<div class="t" style="left:990px;top:180px">Sun Source</div><div class="t" style="left:1111px;top:180px;color:#b4b4b4">None (Light)</div>
<div class="b cl" style="left:990px;top:208px;width:116px;height:16px"><div class="t" style="left:0;top:0">Realtime Shadow Color</div></div>
<div class="t" style="left:990px;top:236px">Environment Lighting</div>
<div class="t" style="left:1005px;top:256px">Source</div><div class="t" style="left:1112px;top:255px;color:#b4b4b4">Skybox</div>
<div class="b cl" style="left:1005px;top:276px;width:100px;height:16px"><div class="t" style="left:0;top:0">Intensity Multiplier</div></div><div class="t" style="left:1303px;top:276px;color:#b4b4b4">1.44</div>
<div class="t" style="left:990px;top:304px">Environment Reflections</div>
<div class="t" style="left:1005px;top:324px">Source</div><div class="t" style="left:1112px;top:323px;color:#b4b4b4">Skybox</div>
<div class="t" style="left:1005px;top:344px">Resolution</div><div class="t" style="left:1112px;top:343px;color:#b4b4b4">128</div>
<div class="t" style="left:1005px;top:364px">Compression</div><div class="t" style="left:1112px;top:363px;color:#b4b4b4">Auto</div>
<div class="b cl" style="left:1005px;top:384px;width:100px;height:16px"><div class="t" style="left:0;top:0">Intensity Multiplier</div></div><div class="t" style="left:1303px;top:384px;color:#b4b4b4">1</div>
<div class="t" style="left:1005px;top:404px">Bounces</div><div class="t" style="left:1303px;top:404px;color:#b4b4b4">1</div>
<div class="t h" style="left:991px;top:431px;color:#ababab;font-size:12px">Other Settings</div>
<div class="t" style="left:990px;top:454px">Fog</div>
<div class="t" style="left:1005px;top:474px">Color</div>
<div class="t" style="left:1005px;top:494px">Mode</div><div class="t" style="left:1112px;top:493px;color:#b4b4b4">Linear</div>
<div class="t" style="left:1005px;top:514px">Start</div><div class="t" style="left:1111px;top:514px;color:#b4b4b4">20</div>
<div class="t" style="left:1005px;top:534px">End</div><div class="t" style="left:1111px;top:534px;color:#b4b4b4">50</div>
<div class="t" style="left:990px;top:562px">Halo Texture</div><div class="t" style="left:1111px;top:562px;color:#b4b4b4">None (Texture 2D)</div>
<div class="t" style="left:990px;top:582px">Halo Strength</div><div class="t" style="left:1303px;top:582px;color:#b4b4b4">0.5</div>
<div class="t" style="left:1225px;top:611px;color:#6c6c6c">Generate Lighting</div>
<div class="t s" style="left:980px;top:639px">0 Non-Directional Lightmaps</div><div class="t s" style="left:1198px;top:639px">0 B</div><div class="t s" style="left:1198px;top:658px">No Lightmaps</div><div class="t s" style="left:980px;top:677px">Occupied Texels: 0.0</div><div class="t s" style="left:980px;top:696px">Total Bake Time: 0:00:00</div>
<!-- taskbar text -->
<div class="t" style="left:1222px;top:745px;color:#fff;font-size:11.5px;letter-spacing:0">ENG</div><div class="t" style="left:1261px;top:745px;color:#fff;font-size:11.5px;letter-spacing:0">6:02 PM</div>
</body></html>
